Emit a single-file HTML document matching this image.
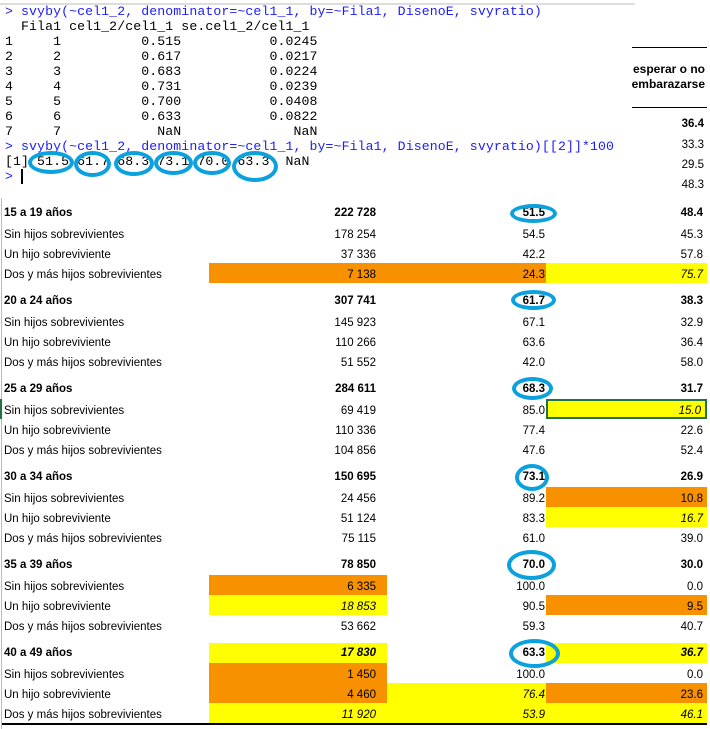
<!DOCTYPE html>
<html><head><meta charset="utf-8"><style>
*{margin:0;padding:0;box-sizing:border-box}
body{width:710px;height:729px;background:#fff;position:relative;overflow:hidden;font-family:"Liberation Sans",Arial,sans-serif}
.con{position:absolute;left:5px;top:4px;font-family:"Liberation Mono",monospace;font-size:13.2px;letter-spacing:0.1px;line-height:15px;white-space:pre;color:#000}
.b{color:#1c1cff}
.r{position:absolute;left:0;width:707px;height:20px;font-size:11.5px;line-height:24px}
.r.h{line-height:20px}
.r .l{position:absolute;left:4px}
.c{position:absolute;top:0;height:20px;text-align:right;padding-right:8px}
.c1{left:209px;width:178px;padding-right:11px}
.c2{left:387px;width:159px;padding-right:1px}
.c3{left:546px;width:161px;padding-right:4px}
.h{font-weight:bold}
.o{background:#f79100}
.y{background:#ffff00;font-style:italic}
.e{position:absolute;border:4px solid #0ba1de;border-radius:50%}
.rt{position:absolute;font-size:11.5px;text-align:right;right:6px}
</style></head><body>
<div style="position:absolute;left:0;top:3px;width:635px;height:2px;background:#ddd"></div>
<div class="con"><span class="b">&gt; svyby(~cel1_2, denominator=~cel1_1, by=~Fila1, DisenoE, svyratio)</span>
  Fila1 cel1_2/cel1_1 se.cel1_2/cel1_1
1     1          0.515           0.0245
2     2          0.617           0.0217
3     3          0.683           0.0224
4     4          0.731           0.0239
5     5          0.700           0.0408
6     6          0.633           0.0822
7     7            NaN              NaN
<span class="b">&gt; svyby(~cel1_2, denominator=~cel1_1, by=~Fila1, DisenoE, svyratio)[[2]]*100</span>
[1] 51.5 61.7 68.3 73.1 70.0 63.3  NaN
<span class="b">&gt; </span><span style="border-left:2px solid #000"> </span></div>
<div class="e" style="left:28px;top:151px;width:46px;height:23px"></div>
<div class="e" style="left:74px;top:151px;width:37px;height:26px"></div>
<div class="e" style="left:114px;top:151px;width:40px;height:25px"></div>
<div class="e" style="left:154px;top:151px;width:39px;height:24px"></div>
<div class="e" style="left:193px;top:151px;width:38px;height:24px"></div>
<div class="e" style="left:232px;top:151px;width:46px;height:31px"></div>

<div style="position:absolute;left:632px;top:47px;width:75px;height:1px;background:#000"></div>
<div style="position:absolute;left:632px;top:107px;width:75px;height:1px;background:#000"></div>
<div style="position:absolute;left:632px;top:62px;width:73px;overflow:hidden;white-space:nowrap;font-size:12px;font-weight:bold;line-height:15px;direction:rtl;text-align:right"><div>Desea esperar o no</div><div>para embarazarse</div></div>
<div class="rt" style="top:118px;font-weight:bold">36.4</div>
<div class="rt" style="top:139px">33.3</div>
<div class="rt" style="top:159px">29.5</div>
<div class="rt" style="top:179px">48.3</div>

<div style="position:absolute;left:1px;top:198px;width:1px;height:531px;background:#bbb"></div>
<div style="position:absolute;left:0;top:399px;width:2px;height:20px;background:#217346"></div>

<div class="r h" style="top:203px"><span class="l">15 a 19 años</span><span class="c c1">222 728</span><span class="c c2">51.5</span><span class="c c3">48.4</span></div>
<div class="r" style="top:223px"><span class="l">Sin hijos sobrevivientes</span><span class="c c1">178 254</span><span class="c c2">54.5</span><span class="c c3">45.3</span></div>
<div class="r" style="top:243px"><span class="l">Un hijo sobreviviente</span><span class="c c1">37 336</span><span class="c c2">42.2</span><span class="c c3">57.8</span></div>
<div class="r" style="top:263px"><span class="l">Dos y más hijos sobrevivientes</span><span class="c c1 o">7 138</span><span class="c c2 o">24.3</span><span class="c c3 y">75.7</span></div>

<div class="r h" style="top:291px"><span class="l">20 a 24 años</span><span class="c c1">307 741</span><span class="c c2">61.7</span><span class="c c3">38.3</span></div>
<div class="r" style="top:311px"><span class="l">Sin hijos sobrevivientes</span><span class="c c1">145 923</span><span class="c c2">67.1</span><span class="c c3">32.9</span></div>
<div class="r" style="top:331px"><span class="l">Un hijo sobreviviente</span><span class="c c1">110 266</span><span class="c c2">63.6</span><span class="c c3">36.4</span></div>
<div class="r" style="top:351px"><span class="l">Dos y más hijos sobrevivientes</span><span class="c c1">51 552</span><span class="c c2">42.0</span><span class="c c3">58.0</span></div>

<div class="r h" style="top:379px"><span class="l">25 a 29 años</span><span class="c c1">284 611</span><span class="c c2">68.3</span><span class="c c3">31.7</span></div>
<div class="r" style="top:399px"><span class="l">Sin hijos sobrevivientes</span><span class="c c1">69 419</span><span class="c c2">85.0</span><span class="c c3 y" style="border:2px solid #217346;line-height:20px">15.0</span></div>
<div class="r" style="top:419px"><span class="l">Un hijo sobreviviente</span><span class="c c1">110 336</span><span class="c c2">77.4</span><span class="c c3">22.6</span></div>
<div class="r" style="top:439px"><span class="l">Dos y más hijos sobrevivientes</span><span class="c c1">104 856</span><span class="c c2">47.6</span><span class="c c3">52.4</span></div>

<div class="r h" style="top:467px"><span class="l">30 a 34 años</span><span class="c c1">150 695</span><span class="c c2">73.1</span><span class="c c3">26.9</span></div>
<div class="r" style="top:487px"><span class="l">Sin hijos sobrevivientes</span><span class="c c1">24 456</span><span class="c c2">89.2</span><span class="c c3 o">10.8</span></div>
<div class="r" style="top:507px"><span class="l">Un hijo sobreviviente</span><span class="c c1">51 124</span><span class="c c2">83.3</span><span class="c c3 y">16.7</span></div>
<div class="r" style="top:527px"><span class="l">Dos y más hijos sobrevivientes</span><span class="c c1">75 115</span><span class="c c2">61.0</span><span class="c c3">39.0</span></div>

<div class="r h" style="top:555px"><span class="l">35 a 39 años</span><span class="c c1">78 850</span><span class="c c2">70.0</span><span class="c c3">30.0</span></div>
<div class="r" style="top:575px"><span class="l">Sin hijos sobrevivientes</span><span class="c c1 o">6 335</span><span class="c c2">100.0</span><span class="c c3">0.0</span></div>
<div class="r" style="top:595px"><span class="l">Un hijo sobreviviente</span><span class="c c1 y">18 853</span><span class="c c2">90.5</span><span class="c c3 o">9.5</span></div>
<div class="r" style="top:615px"><span class="l">Dos y más hijos sobrevivientes</span><span class="c c1">53 662</span><span class="c c2">59.3</span><span class="c c3">40.7</span></div>

<div class="r h" style="top:643px"><span class="l">40 a 49 años</span><span class="c c1 y">17 830</span><span class="c c2">63.3</span><span class="c c3 y">36.7</span></div>
<div class="r" style="top:663px"><span class="l">Sin hijos sobrevivientes</span><span class="c c1 o">1 450</span><span class="c c2">100.0</span><span class="c c3">0.0</span></div>
<div class="r" style="top:683px"><span class="l">Un hijo sobreviviente</span><span class="c c1 o">4 460</span><span class="c c2 y">76.4</span><span class="c c3 o">23.6</span></div>
<div class="r" style="top:703px"><span class="l">Dos y más hijos sobrevivientes</span><span class="c c1 y">11 920</span><span class="c c2 y">53.9</span><span class="c c3 y">46.1</span></div>
<div style="position:absolute;left:2px;top:723px;width:705px;height:2px;background:#000"></div>

<div class="e" style="left:510px;top:204px;width:47px;height:19px"></div>
<div class="e" style="left:511px;top:290px;width:45px;height:20px"></div>
<div class="e" style="left:512px;top:377px;width:41px;height:23px"></div>
<div class="e" style="left:515px;top:464px;width:34px;height:27px"></div>
<div class="e" style="left:507px;top:550px;width:49px;height:30px"></div>
<div class="e" style="left:509px;top:639px;width:51px;height:29px"></div>
</body></html>
